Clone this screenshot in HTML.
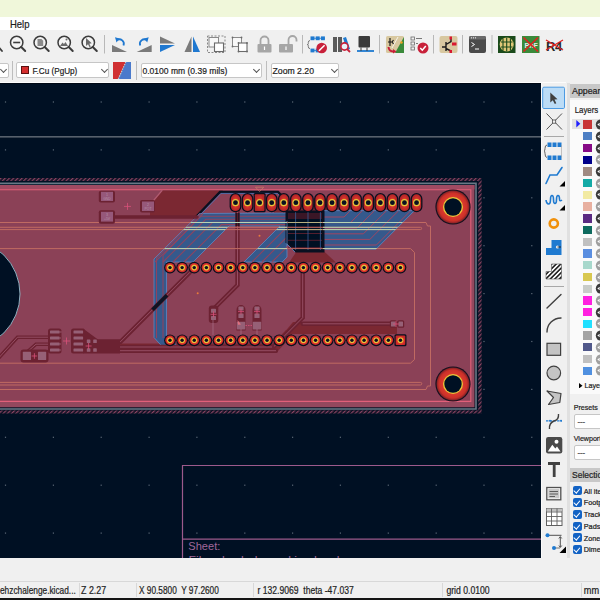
<!DOCTYPE html>
<html><head><meta charset="utf-8">
<style>
*{margin:0;padding:0;box-sizing:border-box}
html,body{width:600px;height:600px;overflow:hidden;background:#f0f0f0;font-family:"Liberation Sans",sans-serif;font-size:10px;color:#000}
.abs{position:absolute}
.t{position:absolute;white-space:nowrap;font-family:"Liberation Sans",sans-serif;color:#1e1e1e;line-height:1}
.dd{position:absolute;background:#fff;border:1px solid #c6c6c6;border-radius:2px}
.chev{position:absolute;width:5px;height:5px;border-right:1px solid #555;border-bottom:1px solid #555;transform:rotate(45deg)}
.sep{position:absolute;width:1px;background:#bdbdbd}
.cb{position:absolute;left:572.5px;width:9px;height:9px;background:#1262c4;border-radius:2px}
.cb:after{content:"";position:absolute;left:2.8px;top:1.2px;width:2.6px;height:4.6px;border-right:1px solid #fff;border-bottom:1px solid #fff;transform:rotate(40deg)}
</style></head><body>
<div class="abs" style="left:0;top:0;width:600px;height:17px;background:#f0f7da"></div>
<div class="abs" style="left:0;top:17px;width:600px;height:13px;background:#fff"></div>
<svg class="abs" style="left:0;top:0" width="600" height="60" viewBox="0 0 600 60">

<path d="M-3 45 L2 51" stroke="#3c3c3c" stroke-width="1.8" stroke-linecap="round"/>
<circle cx="16.7" cy="42.5" r="6.2" fill="#f4f4f4" stroke="#3c3c3c" stroke-width="1.5"/>
<path d="M21.2 47 L25.2 51" stroke="#3c3c3c" stroke-width="2" stroke-linecap="round"/>
<path d="M13.2 42.5 H20.2" stroke="#3c3c3c" stroke-width="1.6"/>
<circle cx="40.2" cy="42.5" r="6.2" fill="#f4f4f4" stroke="#3c3c3c" stroke-width="1.5"/>
<path d="M44.7 47 L48.7 51" stroke="#3c3c3c" stroke-width="2" stroke-linecap="round"/>
<path d="M37.5 39 H41.5 L43.2 40.7 V46 H37.5 Z" fill="#8a8a8a"/>
<circle cx="64.2" cy="42.5" r="6.2" fill="#f4f4f4" stroke="#3c3c3c" stroke-width="1.5"/>
<path d="M68.7 47 L72.7 51" stroke="#3c3c3c" stroke-width="2" stroke-linecap="round"/>
<path d="M60 46 L62.5 42.5 L64 44 L65.5 42 L68 46 Z" fill="#6a6a6a"/><circle cx="66.5" cy="39.5" r="1" fill="#6a6a6a"/>
<circle cx="88.3" cy="42.5" r="6.2" fill="#f4f4f4" stroke="#3c3c3c" stroke-width="1.5"/>
<path d="M92.8 47 L96.8 51" stroke="#3c3c3c" stroke-width="2" stroke-linecap="round"/>
<path d="M86 38 L86 46 L88 44.3 L89.6 47.2 L90.8 46.5 L89.3 43.7 L91.8 43.3 Z" fill="#6a6a6a"/>
<rect x="104" y="35" width="1" height="18.5" fill="#b8b8b8"/>
<path d="M112 45 L127 52 H112 Z" fill="#7a7a7a"/>
<path d="M123.5 45.5 A4.5 4.5 0 0 0 117 40" fill="none" stroke="#1f78d0" stroke-width="1.8"/><path d="M115 37.3 L119.5 38.5 L116.5 42.5 Z" fill="#1f78d0"/>
<path d="M151.7 45 L136.7 52 H151.7 Z" fill="#7a7a7a"/>
<path d="M140.2 45.5 A4.5 4.5 0 0 1 146.7 40" fill="none" stroke="#1f78d0" stroke-width="1.8"/><path d="M148.7 37.3 L144.2 38.5 L147.2 42.5 Z" fill="#1f78d0"/>
<path d="M160 36.5 L175 43.5 H160 Z" fill="#7a7a7a"/><path d="M160 45 H175 L160 52 Z" fill="#1f78d0"/>
<path d="M191.5 36.5 V52 H184.5 Z" fill="#7a7a7a"/><path d="M193 36.5 L200 52 H193 Z" fill="#1f78d0"/>
<rect x="207.5" y="36" width="17.5" height="16.5" fill="none" stroke="#8a8a8a" stroke-width="1" stroke-dasharray="2 1.5"/>
<rect x="209" y="37.5" width="9.5" height="9.5" fill="#f8f8f8" stroke="#8a8a8a" stroke-width="1"/>
<rect x="214.5" y="43" width="9" height="8.5" fill="#fff" stroke="#6a6a6a" stroke-width="1.1"/>
<rect x="232.5" y="37.5" width="9" height="9" fill="#f8f8f8" stroke="#8a8a8a" stroke-width="1"/>
<rect x="238.5" y="43" width="8.5" height="8.5" fill="#fff" stroke="#6a6a6a" stroke-width="1.1"/>
<circle cx="232.5" cy="37.5" r="0.9" fill="#6a6a6a"/>
<circle cx="241.5" cy="37.5" r="0.9" fill="#6a6a6a"/>
<circle cx="232.5" cy="46.5" r="0.9" fill="#6a6a6a"/>
<circle cx="238.5" cy="43" r="0.9" fill="#6a6a6a"/>
<circle cx="247" cy="43" r="0.9" fill="#6a6a6a"/>
<circle cx="238.5" cy="51.5" r="0.9" fill="#6a6a6a"/>
<circle cx="247" cy="51.5" r="0.9" fill="#6a6a6a"/>
<path d="M260.5 44 V40.5 A4 4 0 0 1 268.5 40.5 V44" fill="none" stroke="#a6a6a6" stroke-width="1.8"/>
<rect x="257.5" y="44" width="14" height="8.5" rx="1" fill="#a6a6a6"/><path d="M264.5 46.5 V50" stroke="#fff" stroke-width="1.2"/>
<path d="M288.5 44 V40 A4 4 0 0 1 296.5 40 V41.5" fill="none" stroke="#a6a6a6" stroke-width="1.8"/>
<rect x="279" y="44" width="14" height="8.5" rx="1" fill="#a6a6a6"/><path d="M286 46.5 V50" stroke="#fff" stroke-width="1.2"/>
<rect x="302" y="35" width="1" height="18.5" fill="#b8b8b8"/>
<path d="M311 38.3 H325 M311 50.5 H320" stroke="#1f7ad0" stroke-width="0.8"/>
<rect x="310.5" y="36.4" width="4" height="3.8" fill="#1f7ad0"/>
<rect x="315.7" y="36.4" width="4" height="3.8" fill="#1f7ad0"/>
<rect x="320.9" y="36.4" width="4" height="3.8" fill="#1f7ad0"/>
<rect x="310.5" y="48.6" width="4" height="3.8" fill="#1f7ad0"/>
<rect x="315.7" y="48.6" width="4" height="3.8" fill="#1f7ad0"/>
<path d="M310 40.5 Q308.3 40.5 308.3 42.5 V43.6 Q308.3 44.6 307.3 44.6 Q308.3 44.6 308.3 45.6 V46.6 Q308.3 48.6 310 48.6" fill="none" stroke="#6a6a6a" stroke-width="0.9"/>
<circle cx="321.7" cy="48" r="5.3" fill="#c8203a"/><path d="M319 50.8 L324.6 45.2" stroke="#fff" stroke-width="1.5"/><path d="M318.6 51.3 L319.3 49.6 L320.3 50.6 Z" fill="#fff"/>
<rect x="333" y="37" width="4" height="15" fill="#5a5a5a"/><rect x="338" y="37" width="4" height="15" fill="#5a5a5a"/>
<path d="M343 38 L346 37 L350 49 L347 50 Z" fill="#1f7ad0"/>
<circle cx="344.5" cy="46.5" r="3.6" fill="#e8f0f8" stroke="#c8203a" stroke-width="1.6"/><path d="M347 49 L350 52" stroke="#c8203a" stroke-width="1.8"/>
<rect x="358.5" y="36" width="11.5" height="11.5" rx="1" fill="#3a3a3a"/><path d="M357 51 H374" stroke="#1f7ad0" stroke-width="1.8"/><path d="M361 47.5 V51 M367 47.5 V51" stroke="#3a3a3a" stroke-width="1"/>
<rect x="379" y="35" width="1" height="18.5" fill="#b8b8b8"/>
<rect x="386" y="36" width="18" height="17" rx="1.5" fill="#d8c8a0"/><path d="M404 37 V53 H395 Z" fill="#3a8a3a"/>
<path d="M398 37 L392 48" stroke="#fff" stroke-width="0.8"/><path d="M390 38 V46 M388 42 H392 L393.5 40 M392 42 L393.5 44" stroke="#1a1a1a" stroke-width="1.2" fill="none"/>
<path d="M388.5 47 Q389 52 394 51.5" fill="none" stroke="#c8203a" stroke-width="2"/><path d="M393 49 L396.5 51.5 L393 53.5 Z" fill="#c8203a"/><circle cx="401.5" cy="42.5" r="1.2" fill="#f0a020"/>
<rect x="411" y="37" width="3.5" height="3" fill="none" stroke="#6a6a6a" stroke-width="0.8"/><rect x="411" y="42" width="3.5" height="3" fill="none" stroke="#6a6a6a" stroke-width="0.8"/><rect x="411" y="47" width="3.5" height="3" fill="none" stroke="#6a6a6a" stroke-width="0.8"/>
<path d="M416 38.5 H422 M416 43.5 H418" stroke="#6a6a6a" stroke-width="0.9"/>
<circle cx="423" cy="48" r="5.5" fill="#c8203a"/><path d="M420.3 48 L422.3 50.2 L425.8 46" fill="none" stroke="#fff" stroke-width="1.5"/>
<rect x="433" y="35" width="1" height="18.5" fill="#b8b8b8"/>
<rect x="439.5" y="36" width="18" height="17" rx="2" fill="#d8c8a0"/>
<path d="M442 47 H446 M446 42 V51 M446 44.5 L451 41.5 V38 M446 48.5 L451 51 V53" stroke="#1a1a1a" stroke-width="1.4" fill="none"/><path d="M449.5 36.5 H452 V39.5 H449.5 Z M452 42.5 H456.5 V45.5 H452 Z M449.5 50 H452 V53 H449.5 Z" fill="#d81830"/>
<rect x="462" y="35" width="1" height="18.5" fill="#b8b8b8"/>
<rect x="469" y="36" width="17" height="17" rx="2" fill="#4a4a4a"/><rect x="469" y="36" width="17" height="3.5" rx="1.5" fill="#6a6a6a"/>
<circle cx="471.5" cy="37.8" r="0.6" fill="#fff"/><circle cx="473.5" cy="37.8" r="0.6" fill="#fff"/><circle cx="475.5" cy="37.8" r="0.6" fill="#fff"/>
<path d="M471.5 42.5 L474.5 44.5 L471.5 46.5" fill="none" stroke="#fff" stroke-width="1"/><path d="M475 49 H479" stroke="#fff" stroke-width="1"/>
<rect x="491.5" y="35" width="1" height="18.5" fill="#b8b8b8"/>
<rect x="498" y="36" width="17.5" height="17" fill="#1a4a1a"/><circle cx="506.7" cy="44.5" r="7" fill="#e0c878"/>
<path d="M503 38.5 V50.5 M506.7 37.5 V51.5 M510.4 38.5 V50.5 M501 42 H512.5 M501 47 H512.5" stroke="#1a4a1a" stroke-width="1.1"/>
<rect x="522" y="36" width="17.5" height="17" fill="#3a8a3a"/><text x="524.5" y="47.5" font-family="Liberation Sans" font-size="7" font-weight="bold" fill="#e8e8e8">PnF</text>
<path d="M523.5 37.5 L538 51.5 M538 37.5 L523.5 51.5" stroke="#e02020" stroke-width="1.5"/>
<text x="546" y="51" font-family="Liberation Sans" font-size="13" font-weight="bold" fill="#2a2a2a" letter-spacing="-0.5">R4</text>
<path d="M546 40 L563 50 M546 50 L563 40" stroke="#e02020" stroke-width="1.3"/>
</svg>
<!-- toolbar 2 -->
<div class="dd" style="left:-20px;top:62.5px;width:28.5px;height:15px"></div>
<div class="chev" style="left:1px;top:67px"></div>
<div class="sep" style="left:11.5px;top:61px;height:19px"></div>
<div class="dd" style="left:16px;top:62px;width:93px;height:15.5px"></div>
<div class="abs" style="left:20.5px;top:65.8px;width:8px;height:8px;background:#d42e2e;border:1px solid #5a1010"></div>
<div class="chev" style="left:101.5px;top:67px"></div>
<svg class="abs" style="left:113px;top:61.7px" width="18" height="17" viewBox="0 0 18 17"><rect width="18" height="17" fill="#d03032"/><path d="M13 0 H18 V17 H5 Z" fill="#4a7acc"/><path d="M5.3 17 L12.8 0" stroke="#c8c8c8" stroke-width="1.2" stroke-dasharray="1.5 1"/></svg>
<div class="sep" style="left:136px;top:61px;height:19px"></div>
<div class="dd" style="left:140.5px;top:62.5px;width:121.5px;height:15.5px"></div>
<div class="chev" style="left:254px;top:67px"></div>
<div class="sep" style="left:265.5px;top:61px;height:19px"></div>
<div class="dd" style="left:270.5px;top:62.5px;width:68.5px;height:15.5px"></div>
<div class="chev" style="left:331.5px;top:67px"></div>
<!-- canvas -->
<div class="abs" style="left:0;top:82px;width:566px;height:1.2px;background:#fcfcfc"></div>
<div class="abs" style="left:0;top:83px;width:540.5px;height:474.5px;background:#001023;overflow:hidden">
<svg width="541" height="475" viewBox="0 83 541 475">

<defs>
<pattern id="hat" width="3" height="3" patternUnits="userSpaceOnUse" patternTransform="rotate(45)"><rect width="3" height="3" fill="#0c1022"/><rect width="1.3" height="3" fill="#8a4462"/></pattern>
<radialGradient id="grd"><stop offset="0.5" stop-color="#ea5a2e"/><stop offset="0.78" stop-color="#d8302a"/><stop offset="1" stop-color="#c8282a"/></radialGradient>
<radialGradient id="gov"><stop offset="0.3" stop-color="#e85a2e"/><stop offset="0.6" stop-color="#d0302a"/><stop offset="1" stop-color="#b42628"/></radialGradient>
<radialGradient id="ghole"><stop offset="0.6" stop-color="#dc3a2e"/><stop offset="0.85" stop-color="#cc3028"/><stop offset="1" stop-color="#7a2028"/></radialGradient>
<clipPath id="board"><rect x="-5" y="185" width="479.5" height="222"/></clipPath>
</defs>
<rect x="4.9" y="101.4" width="1.2" height="1.2" fill="#5c6a78"/>
<rect x="4.9" y="149.3" width="1.2" height="1.2" fill="#5c6a78"/>
<rect x="4.9" y="197.2" width="1.2" height="1.2" fill="#5c6a78"/>
<rect x="4.9" y="245.1" width="1.2" height="1.2" fill="#5c6a78"/>
<rect x="4.9" y="293.0" width="1.2" height="1.2" fill="#5c6a78"/>
<rect x="4.9" y="340.9" width="1.2" height="1.2" fill="#5c6a78"/>
<rect x="4.9" y="388.8" width="1.2" height="1.2" fill="#5c6a78"/>
<rect x="4.9" y="436.7" width="1.2" height="1.2" fill="#5c6a78"/>
<rect x="4.9" y="484.6" width="1.2" height="1.2" fill="#5c6a78"/>
<rect x="4.9" y="532.5" width="1.2" height="1.2" fill="#5c6a78"/>
<rect x="52.8" y="101.4" width="1.2" height="1.2" fill="#5c6a78"/>
<rect x="52.8" y="149.3" width="1.2" height="1.2" fill="#5c6a78"/>
<rect x="52.8" y="197.2" width="1.2" height="1.2" fill="#5c6a78"/>
<rect x="52.8" y="245.1" width="1.2" height="1.2" fill="#5c6a78"/>
<rect x="52.8" y="293.0" width="1.2" height="1.2" fill="#5c6a78"/>
<rect x="52.8" y="340.9" width="1.2" height="1.2" fill="#5c6a78"/>
<rect x="52.8" y="388.8" width="1.2" height="1.2" fill="#5c6a78"/>
<rect x="52.8" y="436.7" width="1.2" height="1.2" fill="#5c6a78"/>
<rect x="52.8" y="484.6" width="1.2" height="1.2" fill="#5c6a78"/>
<rect x="52.8" y="532.5" width="1.2" height="1.2" fill="#5c6a78"/>
<rect x="100.6" y="101.4" width="1.2" height="1.2" fill="#5c6a78"/>
<rect x="100.6" y="149.3" width="1.2" height="1.2" fill="#5c6a78"/>
<rect x="100.6" y="197.2" width="1.2" height="1.2" fill="#5c6a78"/>
<rect x="100.6" y="245.1" width="1.2" height="1.2" fill="#5c6a78"/>
<rect x="100.6" y="293.0" width="1.2" height="1.2" fill="#5c6a78"/>
<rect x="100.6" y="340.9" width="1.2" height="1.2" fill="#5c6a78"/>
<rect x="100.6" y="388.8" width="1.2" height="1.2" fill="#5c6a78"/>
<rect x="100.6" y="436.7" width="1.2" height="1.2" fill="#5c6a78"/>
<rect x="100.6" y="484.6" width="1.2" height="1.2" fill="#5c6a78"/>
<rect x="100.6" y="532.5" width="1.2" height="1.2" fill="#5c6a78"/>
<rect x="148.5" y="101.4" width="1.2" height="1.2" fill="#5c6a78"/>
<rect x="148.5" y="149.3" width="1.2" height="1.2" fill="#5c6a78"/>
<rect x="148.5" y="197.2" width="1.2" height="1.2" fill="#5c6a78"/>
<rect x="148.5" y="245.1" width="1.2" height="1.2" fill="#5c6a78"/>
<rect x="148.5" y="293.0" width="1.2" height="1.2" fill="#5c6a78"/>
<rect x="148.5" y="340.9" width="1.2" height="1.2" fill="#5c6a78"/>
<rect x="148.5" y="388.8" width="1.2" height="1.2" fill="#5c6a78"/>
<rect x="148.5" y="436.7" width="1.2" height="1.2" fill="#5c6a78"/>
<rect x="148.5" y="484.6" width="1.2" height="1.2" fill="#5c6a78"/>
<rect x="148.5" y="532.5" width="1.2" height="1.2" fill="#5c6a78"/>
<rect x="196.3" y="101.4" width="1.2" height="1.2" fill="#5c6a78"/>
<rect x="196.3" y="149.3" width="1.2" height="1.2" fill="#5c6a78"/>
<rect x="196.3" y="197.2" width="1.2" height="1.2" fill="#5c6a78"/>
<rect x="196.3" y="245.1" width="1.2" height="1.2" fill="#5c6a78"/>
<rect x="196.3" y="293.0" width="1.2" height="1.2" fill="#5c6a78"/>
<rect x="196.3" y="340.9" width="1.2" height="1.2" fill="#5c6a78"/>
<rect x="196.3" y="388.8" width="1.2" height="1.2" fill="#5c6a78"/>
<rect x="196.3" y="436.7" width="1.2" height="1.2" fill="#5c6a78"/>
<rect x="196.3" y="484.6" width="1.2" height="1.2" fill="#5c6a78"/>
<rect x="196.3" y="532.5" width="1.2" height="1.2" fill="#5c6a78"/>
<rect x="244.2" y="101.4" width="1.2" height="1.2" fill="#5c6a78"/>
<rect x="244.2" y="149.3" width="1.2" height="1.2" fill="#5c6a78"/>
<rect x="244.2" y="197.2" width="1.2" height="1.2" fill="#5c6a78"/>
<rect x="244.2" y="245.1" width="1.2" height="1.2" fill="#5c6a78"/>
<rect x="244.2" y="293.0" width="1.2" height="1.2" fill="#5c6a78"/>
<rect x="244.2" y="340.9" width="1.2" height="1.2" fill="#5c6a78"/>
<rect x="244.2" y="388.8" width="1.2" height="1.2" fill="#5c6a78"/>
<rect x="244.2" y="436.7" width="1.2" height="1.2" fill="#5c6a78"/>
<rect x="244.2" y="484.6" width="1.2" height="1.2" fill="#5c6a78"/>
<rect x="244.2" y="532.5" width="1.2" height="1.2" fill="#5c6a78"/>
<rect x="292.0" y="101.4" width="1.2" height="1.2" fill="#5c6a78"/>
<rect x="292.0" y="149.3" width="1.2" height="1.2" fill="#5c6a78"/>
<rect x="292.0" y="197.2" width="1.2" height="1.2" fill="#5c6a78"/>
<rect x="292.0" y="245.1" width="1.2" height="1.2" fill="#5c6a78"/>
<rect x="292.0" y="293.0" width="1.2" height="1.2" fill="#5c6a78"/>
<rect x="292.0" y="340.9" width="1.2" height="1.2" fill="#5c6a78"/>
<rect x="292.0" y="388.8" width="1.2" height="1.2" fill="#5c6a78"/>
<rect x="292.0" y="436.7" width="1.2" height="1.2" fill="#5c6a78"/>
<rect x="292.0" y="484.6" width="1.2" height="1.2" fill="#5c6a78"/>
<rect x="292.0" y="532.5" width="1.2" height="1.2" fill="#5c6a78"/>
<rect x="339.8" y="101.4" width="1.2" height="1.2" fill="#5c6a78"/>
<rect x="339.8" y="149.3" width="1.2" height="1.2" fill="#5c6a78"/>
<rect x="339.8" y="197.2" width="1.2" height="1.2" fill="#5c6a78"/>
<rect x="339.8" y="245.1" width="1.2" height="1.2" fill="#5c6a78"/>
<rect x="339.8" y="293.0" width="1.2" height="1.2" fill="#5c6a78"/>
<rect x="339.8" y="340.9" width="1.2" height="1.2" fill="#5c6a78"/>
<rect x="339.8" y="388.8" width="1.2" height="1.2" fill="#5c6a78"/>
<rect x="339.8" y="436.7" width="1.2" height="1.2" fill="#5c6a78"/>
<rect x="339.8" y="484.6" width="1.2" height="1.2" fill="#5c6a78"/>
<rect x="339.8" y="532.5" width="1.2" height="1.2" fill="#5c6a78"/>
<rect x="387.7" y="101.4" width="1.2" height="1.2" fill="#5c6a78"/>
<rect x="387.7" y="149.3" width="1.2" height="1.2" fill="#5c6a78"/>
<rect x="387.7" y="197.2" width="1.2" height="1.2" fill="#5c6a78"/>
<rect x="387.7" y="245.1" width="1.2" height="1.2" fill="#5c6a78"/>
<rect x="387.7" y="293.0" width="1.2" height="1.2" fill="#5c6a78"/>
<rect x="387.7" y="340.9" width="1.2" height="1.2" fill="#5c6a78"/>
<rect x="387.7" y="388.8" width="1.2" height="1.2" fill="#5c6a78"/>
<rect x="387.7" y="436.7" width="1.2" height="1.2" fill="#5c6a78"/>
<rect x="387.7" y="484.6" width="1.2" height="1.2" fill="#5c6a78"/>
<rect x="387.7" y="532.5" width="1.2" height="1.2" fill="#5c6a78"/>
<rect x="435.6" y="101.4" width="1.2" height="1.2" fill="#5c6a78"/>
<rect x="435.6" y="149.3" width="1.2" height="1.2" fill="#5c6a78"/>
<rect x="435.6" y="197.2" width="1.2" height="1.2" fill="#5c6a78"/>
<rect x="435.6" y="245.1" width="1.2" height="1.2" fill="#5c6a78"/>
<rect x="435.6" y="293.0" width="1.2" height="1.2" fill="#5c6a78"/>
<rect x="435.6" y="340.9" width="1.2" height="1.2" fill="#5c6a78"/>
<rect x="435.6" y="388.8" width="1.2" height="1.2" fill="#5c6a78"/>
<rect x="435.6" y="436.7" width="1.2" height="1.2" fill="#5c6a78"/>
<rect x="435.6" y="484.6" width="1.2" height="1.2" fill="#5c6a78"/>
<rect x="435.6" y="532.5" width="1.2" height="1.2" fill="#5c6a78"/>
<rect x="483.4" y="101.4" width="1.2" height="1.2" fill="#5c6a78"/>
<rect x="483.4" y="149.3" width="1.2" height="1.2" fill="#5c6a78"/>
<rect x="483.4" y="197.2" width="1.2" height="1.2" fill="#5c6a78"/>
<rect x="483.4" y="245.1" width="1.2" height="1.2" fill="#5c6a78"/>
<rect x="483.4" y="293.0" width="1.2" height="1.2" fill="#5c6a78"/>
<rect x="483.4" y="340.9" width="1.2" height="1.2" fill="#5c6a78"/>
<rect x="483.4" y="388.8" width="1.2" height="1.2" fill="#5c6a78"/>
<rect x="483.4" y="436.7" width="1.2" height="1.2" fill="#5c6a78"/>
<rect x="483.4" y="484.6" width="1.2" height="1.2" fill="#5c6a78"/>
<rect x="483.4" y="532.5" width="1.2" height="1.2" fill="#5c6a78"/>
<rect x="531.2" y="101.4" width="1.2" height="1.2" fill="#5c6a78"/>
<rect x="531.2" y="149.3" width="1.2" height="1.2" fill="#5c6a78"/>
<rect x="531.2" y="197.2" width="1.2" height="1.2" fill="#5c6a78"/>
<rect x="531.2" y="245.1" width="1.2" height="1.2" fill="#5c6a78"/>
<rect x="531.2" y="293.0" width="1.2" height="1.2" fill="#5c6a78"/>
<rect x="531.2" y="340.9" width="1.2" height="1.2" fill="#5c6a78"/>
<rect x="531.2" y="388.8" width="1.2" height="1.2" fill="#5c6a78"/>
<rect x="531.2" y="436.7" width="1.2" height="1.2" fill="#5c6a78"/>
<rect x="531.2" y="484.6" width="1.2" height="1.2" fill="#5c6a78"/>
<rect x="531.2" y="532.5" width="1.2" height="1.2" fill="#5c6a78"/>
<rect x="0" y="136" width="541" height="1.6" fill="#56606c"/>
<path d="M182.5 558 V465.5 H541 M182.5 539.2 H541" fill="none" stroke="#9c5a8c" stroke-width="1.2"/>
<text x="188.3" y="550.2" font-family="Liberation Sans" font-size="11" fill="#a0689a" textLength="32" lengthAdjust="spacingAndGlyphs">Sheet:</text>
<text x="188.5" y="564.3" font-family="Liberation Sans" font-size="11" fill="#a0689a" textLength="155" lengthAdjust="spacingAndGlyphs">File: ehzchalenge.kicad_pcb</text>
<path d="M-5 178 H481.6 V413.6 H-5 V410.6 H478.3 V181.1 H-5 Z" fill="url(#hat)"/>
<path d="M-5 183.4 H476 V409 H-5" fill="none" stroke="#687886" stroke-width="1.6"/>
<rect x="-5" y="185" width="479.5" height="222.3" fill="#94485e"/>
<rect x="-5" y="185" width="479.5" height="4.5" fill="#a04a62"/>
<rect x="-5" y="189.5" width="476" height="212" fill="#8b4157"/>
<path d="M-5 189.8 H470.8 V401.4 H-5" fill="none" stroke="#e2607a" stroke-width="1.1"/>
<g clip-path="url(#board)">
<path d="M162.0 190.5 L223.0 190.5 L196.0 217.5 L150.0 217.5 L150.0 201.0 L154.0 200.0 Z" fill="#7b2832"/>
<rect x="274" y="204" width="60" height="9" fill="#7b2832"/>
<path d="M298.0 249.5 L322.0 249.5 L336.0 262.5 L289.0 262.5 Z" fill="#7b2832"/>
<path d="M293.0 322.0 L397.0 322.0 L397.0 334.0 L283.0 334.0 Z" fill="#7b2832"/>
<path d="M96.0 343.5 L273.0 343.5 L286.0 330.0 L292.0 330.0 L292.0 336.0 L276.0 353.0 L96.0 353.0 Z" fill="#7b2832"/>
<path d="M290 204 L278 192 H220 L194 219" fill="none" stroke="#0a1020" stroke-width="2.4"/>
<path d="M288.5 204.5 L277.5 193.4 H221 L195.5 219.8" fill="none" stroke="#4a7ac0" stroke-width="0.8"/>
<clipPath id="blueclip"><path d="M154.0 337.5 L164.0 348.5 L180.0 348.5 L166.5 336.0 L166.5 262.0 L193.0 262.0 L229.0 226.0 L280.0 226.0 L244.0 262.0 L282.0 262.0 L287.0 257.0 L287.0 213.0 L199.5 213.5 L154.0 259.0 Z M323.0 210.6 L414.5 210.6 L376.0 249.2 L323.0 249.2 Z"/></clipPath>
<path d="M154.0 337.5 L164.0 348.5 L180.0 348.5 L166.5 336.0 L166.5 262.0 L193.0 262.0 L229.0 226.0 L280.0 226.0 L244.0 262.0 L282.0 262.0 L287.0 257.0 L287.0 213.0 L199.5 213.5 L154.0 259.0 Z" fill="#35598c" stroke="#5a88c4" stroke-width="0.8"/>
<path d="M323.0 210.6 L414.5 210.6 L376.0 249.2 L323.0 249.2 Z" fill="#35598c" stroke="#5a88c4" stroke-width="0.8"/>
<path d="M155 262 L200.7 216.3 H287" fill="none" stroke="#8e4460" stroke-width="1.1"/>
<path d="M163 262 L205.7 219.3 H287" fill="none" stroke="#8e4460" stroke-width="1.1"/>
<path d="M173 262 L212.8 222.2 H287" fill="none" stroke="#8e4460" stroke-width="1.1"/>
<path d="M184 262 L221.4 224.6 H287" fill="none" stroke="#8e4460" stroke-width="1.1"/>
<path d="M156.5 338 V258.0 L200.5 213.5" fill="none" stroke="#8e4460" stroke-width="1.1"/>
<path d="M163 338 V255.4 L203.1 213.5" fill="none" stroke="#8e4460" stroke-width="1.1"/>
<path d="M252 262 L285.5 228.5 H287" fill="none" stroke="#8e4460" stroke-width="1.1"/>
<path d="M262 262 L290 234 H287" fill="none" stroke="#8e4460" stroke-width="1.1"/>
<path d="M272 262 L293.7 240.3 H287" fill="none" stroke="#8e4460" stroke-width="1.1"/>
<path d="M350.0 211 L344.0 217.0 H323" fill="none" stroke="#a04662" stroke-width="1"/>
<path d="M362.1 211 L350.5 222.6 H323" fill="none" stroke="#a04662" stroke-width="1"/>
<path d="M374.1 211 L356.9 228.2 H323" fill="none" stroke="#a04662" stroke-width="1"/>
<path d="M386.2 211 L363.4 233.8 H323" fill="none" stroke="#a04662" stroke-width="1"/>
<path d="M398.3 211 L369.9 239.4 H323" fill="none" stroke="#a04662" stroke-width="1"/>
<path d="M410.4 211 L376.4 245.0 H323" fill="none" stroke="#a04662" stroke-width="1"/>
<path d="M285.5 210.5 L324.5 210.5 L324.5 252.5 L295.5 252.5 L285.5 242.5 Z" fill="#0a1020"/>
<path d="M288.0 213.0 L322.0 213.0 L322.0 250.0 L296.5 250.0 L288.0 241.5 Z" fill="#001023"/>
<rect x="288" y="213" width="34" height="6" fill="#3a1626"/>
<path d="M288 227.3 H322" stroke="#6a2230" stroke-width="0.8"/>
<path d="M288 233.5 H322" stroke="#6a2230" stroke-width="0.8"/>
<path d="M288 240.3 H322" stroke="#6a2230" stroke-width="0.8"/>
<path d="M288 247.7 H322" stroke="#6a2230" stroke-width="0.8"/>
<path d="M295.6 211 V250" stroke="#3a5e98" stroke-width="0.8"/>
<path d="M308 211 V250" stroke="#3a5e98" stroke-width="0.8"/>
<path d="M320.4 211 V250" stroke="#3a5e98" stroke-width="0.8"/>
<path d="M287 221 V244 L295 252" fill="none" stroke="#5a88c8" stroke-width="0.8"/>
<path d="M237.5 211 V285 L214 308.5" fill="none" stroke="#6c2232" stroke-width="4.4" stroke-linejoin="miter" stroke-linecap="round"/>
<path d="M237.5 211 V285 L214 308.5" fill="none" stroke="#a05870" stroke-width="0.8" stroke-linejoin="miter"/>
<path d="M302.7 273 V317.7 L272 348.4" fill="none" stroke="#6c2232" stroke-width="4.4" stroke-linejoin="miter" stroke-linecap="round"/>
<path d="M302.7 273 V317.7 L272 348.4" fill="none" stroke="#a05870" stroke-width="0.8" stroke-linejoin="miter"/>
<path d="M96 341.7 H120.5 L190 272.2" fill="none" stroke="#6c2232" stroke-width="4.4" stroke-linejoin="miter" stroke-linecap="round"/>
<path d="M96 341.7 H120.5 L190 272.2" fill="none" stroke="#a05870" stroke-width="0.8" stroke-linejoin="miter"/>
<path d="M302.7 323.8 H397" fill="none" stroke="#6c2232" stroke-width="4.4" stroke-linejoin="miter" stroke-linecap="round"/>
<path d="M302.7 323.8 H397" fill="none" stroke="#a05870" stroke-width="0.8" stroke-linejoin="miter"/>
<path d="M96 347 H272 M96 350.7 H276" fill="none" stroke="#6c2232" stroke-width="4.4" stroke-linejoin="miter" stroke-linecap="round"/>
<path d="M96 347 H272 M96 350.7 H276" fill="none" stroke="#a05870" stroke-width="0.8" stroke-linejoin="miter"/>
<path d="M-5 362 L17.5 337.2 H50" fill="none" stroke="#6c2232" stroke-width="3.6" stroke-linejoin="miter" stroke-linecap="round"/>
<path d="M-5 362 L17.5 337.2 H50" fill="none" stroke="#a05870" stroke-width="0.8" stroke-linejoin="miter"/>
<path d="M26 353 L36 344.2 H50" fill="none" stroke="#6c2232" stroke-width="3.6" stroke-linejoin="miter" stroke-linecap="round"/>
<path d="M26 353 L36 344.2 H50" fill="none" stroke="#a05870" stroke-width="0.8" stroke-linejoin="miter"/>
<path d="M46 352 L50 350" fill="none" stroke="#6c2232" stroke-width="2.5" stroke-linejoin="miter" stroke-linecap="round"/>
<path d="M113 217 H197" fill="none" stroke="#6c2232" stroke-width="3.5" stroke-linejoin="miter" stroke-linecap="round"/>
<path d="M154 200 L162 190.5" fill="none" stroke="#b05a70" stroke-width="1.2" stroke-linejoin="miter" stroke-linecap="round"/>
<path d="M152.5 309.7 L167 295.2" stroke="#0e1424" stroke-width="3.6"/>
<path d="M237.5 213 V226" stroke="#0e1424" stroke-width="3.8"/><path d="M237.5 213 V226" stroke="#5a1c2a" stroke-width="1.6"/>
<path d="M-5 222.5 H426 L427.5 226 H430.5 V386 H427.5 L426 389.5 H-5" fill="none" stroke="#c06a62" stroke-width="1"/>
<path d="M-5 227.3 H420.5 A1.15 1.15 0 0 1 420.5 229.6 H-5" fill="none" stroke="#c06a62" stroke-width="1"/>
<path d="M-5 382.4 H420.5 A1.3 1.3 0 0 1 420.5 385 H-5" fill="none" stroke="#c06a62" stroke-width="1"/>
<path d="M-5 248.6 H410.5 L414.5 252.5 V359.5 L410.5 363.2 H-5" fill="none" stroke="#c06a62" stroke-width="1"/>
<g clip-path="url(#blueclip)" fill="none" stroke="#b8d4b4" stroke-width="1">
<path d="M-5 222.5 H426 M-5 227.3 H420.5 M-5 229.6 H420.5 M-5 248.6 H410.5"/>
</g>
<path d="M288 222.5 H322 M288 229.6 H322" stroke="#b8b080" stroke-width="1"/>
<circle cx="-35" cy="294" r="55" fill="#001023" stroke="#8fb0c0" stroke-width="1"/>
<rect x="98.8" y="190.7" width="16.2" height="11.9" rx="2" fill="#6c2232"/>
<rect x="98.8" y="210.2" width="16.2" height="13.5" rx="2" fill="#6c2232"/>
<rect x="140" y="200" width="15" height="12.4" rx="2" fill="#6c2232"/>
<rect x="101" y="191.8" width="12" height="9.2" fill="#96587a"/>
<text x="107.0" y="196.0" font-family="Liberation Sans" font-size="3.6" fill="#b890a8" text-anchor="middle">1</text>
<text x="107.0" y="199.8" font-family="Liberation Sans" font-size="3.4" fill="#b890a8" text-anchor="middle">GND</text>
<rect x="101" y="211.8" width="12" height="9.8" fill="#96587a"/>
<text x="107.0" y="216.0" font-family="Liberation Sans" font-size="3.6" fill="#b890a8" text-anchor="middle">3</text>
<text x="107.0" y="219.8" font-family="Liberation Sans" font-size="3.4" fill="#b890a8" text-anchor="middle">+5V</text>
<rect x="142" y="201.5" width="12" height="9.5" fill="#96587a"/>
<text x="148.0" y="205.7" font-family="Liberation Sans" font-size="3.6" fill="#b890a8" text-anchor="middle">2</text>
<text x="148.0" y="209.5" font-family="Liberation Sans" font-size="3.4" fill="#b890a8" text-anchor="middle">POT</text>
<path d="M124.0 206.4 H131.0 M127.5 202.9 V209.9" stroke="#d8507a" stroke-width="0.8"/>
<rect x="48" y="328.5" width="13.5" height="25" rx="2.5" fill="#6c2232"/>
<rect x="71" y="328.5" width="14" height="25" rx="2.5" fill="#6c2232"/>
<path d="M83 328.5 L98 339.5 H120 V353.5 H83 Z" fill="#6c2232"/>
<rect x="50" y="330.4" width="9.6" height="3.2" rx="0.6" fill="#966076"/>
<rect x="73.5" y="330.4" width="9.6" height="3.2" rx="0.6" fill="#966076"/>
<rect x="50" y="336.4" width="9.6" height="3.2" rx="0.6" fill="#966076"/>
<rect x="73.5" y="336.4" width="9.6" height="3.2" rx="0.6" fill="#966076"/>
<rect x="50" y="342.4" width="9.6" height="3.2" rx="0.6" fill="#966076"/>
<rect x="73.5" y="342.4" width="9.6" height="3.2" rx="0.6" fill="#966076"/>
<rect x="50" y="348.4" width="9.6" height="3.2" rx="0.6" fill="#966076"/>
<rect x="73.5" y="348.4" width="9.6" height="3.2" rx="0.6" fill="#966076"/>
<path d="M59.6 332 H61.5 M59.6 338 H61 M59.6 344 H61 M59.6 350 H61" stroke="#c090a8" stroke-width="0.5"/>
<path d="M63.0 341 H70.0 M66.5 337.5 V344.5" stroke="#d8507a" stroke-width="0.8"/>
<rect x="86.8" y="339.5" width="3.6" height="3.5" rx="0.6" fill="#966076"/>
<rect x="86.8" y="348.3" width="3.6" height="3.5" rx="0.6" fill="#966076"/>
<rect x="93.2" y="339.5" width="3.6" height="3.5" rx="0.6" fill="#966076"/>
<rect x="93.2" y="348.3" width="3.6" height="3.5" rx="0.6" fill="#966076"/>
<path d="M85.6 346 H91.6 M88.6 343 V349" stroke="#d8507a" stroke-width="0.8"/>
<rect x="20.5" y="349.5" width="28" height="13" rx="3" fill="#6c2232"/>
<rect x="22.8" y="351.8" width="8.2" height="8.2" rx="0.6" fill="#966076"/>
<rect x="38" y="351.8" width="8.2" height="8.2" rx="0.6" fill="#966076"/>
<path d="M31.599999999999998 356 H37.199999999999996 M34.4 353.2 V358.8" stroke="#d8507a" stroke-width="0.8"/>
<rect x="208.8" y="305.5" width="9.5" height="17.5" rx="3" fill="#6c2232"/>
<rect x="211" y="308.8" width="5" height="4" rx="0.6" fill="#966076"/>
<rect x="211" y="316" width="5" height="4" rx="0.6" fill="#966076"/>
<path d="M210.5 314.3 H216.5 M213.5 311.3 V317.3" stroke="#d8507a" stroke-width="0.8"/>
<path d="M213 320 V335" stroke="#b07a90" stroke-width="0.6"/>
<path d="M236.5 330.5 V310 A4.5 5 0 0 1 245.5 310 V330.5 Z" fill="#6c2232"/>
<rect x="238.4" y="306.5" width="5.2" height="4" rx="0.6" fill="#966076"/>
<rect x="238.4" y="313.5" width="5.2" height="4.5" rx="0.6" fill="#966076"/>
<path d="M238 311.6 H244 M241 308.6 V314.6" stroke="#d8507a" stroke-width="0.8"/>
<rect x="236.8" y="321.8" width="8.4" height="7.6" rx="0.6" fill="#966076"/>
<path d="M241 329 V335" stroke="#b07a90" stroke-width="0.6"/>
<path d="M252.5 330.5 V310 A4.5 5 0 0 1 261.5 310 V330.5 Z" fill="#6c2232"/>
<rect x="254.4" y="306.5" width="5.2" height="4" rx="0.6" fill="#966076"/>
<rect x="254.4" y="313.5" width="5.2" height="4.5" rx="0.6" fill="#966076"/>
<path d="M254 311.6 H260 M257 308.6 V314.6" stroke="#d8507a" stroke-width="0.8"/>
<rect x="252.8" y="321.8" width="8.4" height="7.6" rx="0.6" fill="#966076"/>
<path d="M257 329 V335" stroke="#b07a90" stroke-width="0.6"/>
<path d="M245.5 325.5 H252.5" stroke="#d8507a" stroke-width="0.8" stroke-dasharray="1.5 1"/>
<path d="M237.5 320 L241 324.5 L238 324.7 Z" fill="#e07080"/>
<rect x="389.8" y="320.3" width="6.9" height="7.4" rx="1.5" fill="#6c2232"/>
<rect x="391" y="321.5" width="4.5" height="5" rx="0.6" fill="#966076"/>
<rect x="397.3" y="320.3" width="6.9" height="7.4" rx="1.5" fill="#6c2232"/>
<rect x="398.5" y="321.5" width="4.5" height="5" rx="0.6" fill="#966076"/>
<path d="M393 324 H399 M396 321 V327" stroke="#d8507a" stroke-width="0.8"/>
<circle cx="259.5" cy="235.8" r="1" fill="#e87a3a"/>
<circle cx="197.7" cy="293.3" r="1" fill="#e87a3a"/>
<path d="M255.5 187.2 H263.7 L259.6 191.5 Z" fill="none" stroke="#c8806a" stroke-width="0.7"/>
<circle cx="453" cy="207" r="17.6" fill="#14101e"/>
<circle cx="453" cy="207" r="16.5" fill="url(#ghole)"/>
<circle cx="453" cy="207" r="10" fill="#eac83a"/>
<circle cx="453" cy="207" r="8.7" fill="#001023"/>
<circle cx="453" cy="384" r="17.6" fill="#14101e"/>
<circle cx="453" cy="384" r="16.5" fill="url(#ghole)"/>
<circle cx="453" cy="384" r="10" fill="#eac83a"/>
<circle cx="453" cy="384" r="8.7" fill="#001023"/>
<rect x="229.60" y="193.10" width="11.8" height="19.2" rx="5.9" fill="#0a0f1e"/>
<rect x="230.90" y="194.30" width="9.2" height="16.8" rx="4.6" fill="url(#gov)"/>
<circle cx="235.5" cy="202.7" r="3.6" fill="#e8c23a"/>
<circle cx="235.5" cy="202.7" r="2.4" fill="#0a1020"/>
<rect x="241.67" y="193.10" width="11.8" height="19.2" rx="5.9" fill="#0a0f1e"/>
<rect x="242.97" y="194.30" width="9.2" height="16.8" rx="4.6" fill="url(#gov)"/>
<circle cx="247.57" cy="202.7" r="3.6" fill="#e8c23a"/>
<circle cx="247.57" cy="202.7" r="2.4" fill="#0a1020"/>
<rect x="253.64" y="193.1" width="12" height="19.2" rx="1.5" fill="#0a0f1e"/>
<rect x="254.83999999999997" y="194.29999999999998" width="9.6" height="16.8" rx="1" fill="url(#gov)"/>
<circle cx="259.64" cy="202.7" r="3.6" fill="#e8c23a"/>
<circle cx="259.64" cy="202.7" r="2.4" fill="#0a1020"/>
<rect x="265.81" y="193.10" width="11.8" height="19.2" rx="5.9" fill="#0a0f1e"/>
<rect x="267.11" y="194.30" width="9.2" height="16.8" rx="4.6" fill="url(#gov)"/>
<circle cx="271.71" cy="202.7" r="3.6" fill="#e8c23a"/>
<circle cx="271.71" cy="202.7" r="2.4" fill="#0a1020"/>
<rect x="277.88" y="193.10" width="11.8" height="19.2" rx="5.9" fill="#0a0f1e"/>
<rect x="279.18" y="194.30" width="9.2" height="16.8" rx="4.6" fill="url(#gov)"/>
<circle cx="283.78" cy="202.7" r="3.6" fill="#e8c23a"/>
<circle cx="283.78" cy="202.7" r="2.4" fill="#0a1020"/>
<rect x="289.95" y="193.10" width="11.8" height="19.2" rx="5.9" fill="#0a0f1e"/>
<rect x="291.25" y="194.30" width="9.2" height="16.8" rx="4.6" fill="url(#gov)"/>
<circle cx="295.85" cy="202.7" r="3.6" fill="#e8c23a"/>
<circle cx="295.85" cy="202.7" r="2.4" fill="#0a1020"/>
<rect x="302.02" y="193.10" width="11.8" height="19.2" rx="5.9" fill="#0a0f1e"/>
<rect x="303.32" y="194.30" width="9.2" height="16.8" rx="4.6" fill="url(#gov)"/>
<circle cx="307.92" cy="202.7" r="3.6" fill="#e8c23a"/>
<circle cx="307.92" cy="202.7" r="2.4" fill="#0a1020"/>
<rect x="314.09" y="193.10" width="11.8" height="19.2" rx="5.9" fill="#0a0f1e"/>
<rect x="315.39" y="194.30" width="9.2" height="16.8" rx="4.6" fill="url(#gov)"/>
<circle cx="319.99" cy="202.7" r="3.6" fill="#e8c23a"/>
<circle cx="319.99" cy="202.7" r="2.4" fill="#0a1020"/>
<rect x="326.16" y="193.10" width="11.8" height="19.2" rx="5.9" fill="#0a0f1e"/>
<rect x="327.46" y="194.30" width="9.2" height="16.8" rx="4.6" fill="url(#gov)"/>
<circle cx="332.06" cy="202.7" r="3.6" fill="#e8c23a"/>
<circle cx="332.06" cy="202.7" r="2.4" fill="#0a1020"/>
<rect x="338.23" y="193.10" width="11.8" height="19.2" rx="5.9" fill="#0a0f1e"/>
<rect x="339.53" y="194.30" width="9.2" height="16.8" rx="4.6" fill="url(#gov)"/>
<circle cx="344.13" cy="202.7" r="3.6" fill="#e8c23a"/>
<circle cx="344.13" cy="202.7" r="2.4" fill="#0a1020"/>
<rect x="350.30" y="193.10" width="11.8" height="19.2" rx="5.9" fill="#0a0f1e"/>
<rect x="351.60" y="194.30" width="9.2" height="16.8" rx="4.6" fill="url(#gov)"/>
<circle cx="356.2" cy="202.7" r="3.6" fill="#e8c23a"/>
<circle cx="356.2" cy="202.7" r="2.4" fill="#0a1020"/>
<rect x="362.37" y="193.10" width="11.8" height="19.2" rx="5.9" fill="#0a0f1e"/>
<rect x="363.67" y="194.30" width="9.2" height="16.8" rx="4.6" fill="url(#gov)"/>
<circle cx="368.27" cy="202.7" r="3.6" fill="#e8c23a"/>
<circle cx="368.27" cy="202.7" r="2.4" fill="#0a1020"/>
<rect x="374.44" y="193.10" width="11.8" height="19.2" rx="5.9" fill="#0a0f1e"/>
<rect x="375.74" y="194.30" width="9.2" height="16.8" rx="4.6" fill="url(#gov)"/>
<circle cx="380.34000000000003" cy="202.7" r="3.6" fill="#e8c23a"/>
<circle cx="380.34000000000003" cy="202.7" r="2.4" fill="#0a1020"/>
<rect x="386.51" y="193.10" width="11.8" height="19.2" rx="5.9" fill="#0a0f1e"/>
<rect x="387.81" y="194.30" width="9.2" height="16.8" rx="4.6" fill="url(#gov)"/>
<circle cx="392.40999999999997" cy="202.7" r="3.6" fill="#e8c23a"/>
<circle cx="392.40999999999997" cy="202.7" r="2.4" fill="#0a1020"/>
<rect x="398.58" y="193.10" width="11.8" height="19.2" rx="5.9" fill="#0a0f1e"/>
<rect x="399.88" y="194.30" width="9.2" height="16.8" rx="4.6" fill="url(#gov)"/>
<circle cx="404.48" cy="202.7" r="3.6" fill="#e8c23a"/>
<circle cx="404.48" cy="202.7" r="2.4" fill="#0a1020"/>
<rect x="410.65" y="193.10" width="11.8" height="19.2" rx="5.9" fill="#0a0f1e"/>
<rect x="411.95" y="194.30" width="9.2" height="16.8" rx="4.6" fill="url(#gov)"/>
<circle cx="416.55" cy="202.7" r="3.6" fill="#e8c23a"/>
<circle cx="416.55" cy="202.7" r="2.4" fill="#0a1020"/>
<circle cx="170.0" cy="267.6" r="5.9" fill="#0a0f1e"/>
<circle cx="170.0" cy="267.6" r="4.7" fill="url(#grd)"/>
<circle cx="170.0" cy="267.6" r="2.8" fill="#e8c23a"/>
<circle cx="170.0" cy="267.6" r="1.7" fill="#0a1020"/>
<circle cx="182.13" cy="267.6" r="5.9" fill="#0a0f1e"/>
<circle cx="182.13" cy="267.6" r="4.7" fill="url(#grd)"/>
<circle cx="182.13" cy="267.6" r="2.8" fill="#e8c23a"/>
<circle cx="182.13" cy="267.6" r="1.7" fill="#0a1020"/>
<circle cx="194.26" cy="267.6" r="5.9" fill="#0a0f1e"/>
<circle cx="194.26" cy="267.6" r="4.7" fill="url(#grd)"/>
<circle cx="194.26" cy="267.6" r="2.8" fill="#e8c23a"/>
<circle cx="194.26" cy="267.6" r="1.7" fill="#0a1020"/>
<circle cx="206.39" cy="267.6" r="5.9" fill="#0a0f1e"/>
<circle cx="206.39" cy="267.6" r="4.7" fill="url(#grd)"/>
<circle cx="206.39" cy="267.6" r="2.8" fill="#e8c23a"/>
<circle cx="206.39" cy="267.6" r="1.7" fill="#0a1020"/>
<circle cx="218.52" cy="267.6" r="5.9" fill="#0a0f1e"/>
<circle cx="218.52" cy="267.6" r="4.7" fill="url(#grd)"/>
<circle cx="218.52" cy="267.6" r="2.8" fill="#e8c23a"/>
<circle cx="218.52" cy="267.6" r="1.7" fill="#0a1020"/>
<circle cx="230.65" cy="267.6" r="5.9" fill="#0a0f1e"/>
<circle cx="230.65" cy="267.6" r="4.7" fill="url(#grd)"/>
<circle cx="230.65" cy="267.6" r="2.8" fill="#e8c23a"/>
<circle cx="230.65" cy="267.6" r="1.7" fill="#0a1020"/>
<circle cx="242.78" cy="267.6" r="5.9" fill="#0a0f1e"/>
<circle cx="242.78" cy="267.6" r="4.7" fill="url(#grd)"/>
<circle cx="242.78" cy="267.6" r="2.8" fill="#e8c23a"/>
<circle cx="242.78" cy="267.6" r="1.7" fill="#0a1020"/>
<circle cx="254.91000000000003" cy="267.6" r="5.9" fill="#0a0f1e"/>
<circle cx="254.91000000000003" cy="267.6" r="4.7" fill="url(#grd)"/>
<circle cx="254.91000000000003" cy="267.6" r="2.8" fill="#e8c23a"/>
<circle cx="254.91000000000003" cy="267.6" r="1.7" fill="#0a1020"/>
<circle cx="267.04" cy="267.6" r="5.9" fill="#0a0f1e"/>
<circle cx="267.04" cy="267.6" r="4.7" fill="url(#grd)"/>
<circle cx="267.04" cy="267.6" r="2.8" fill="#e8c23a"/>
<circle cx="267.04" cy="267.6" r="1.7" fill="#0a1020"/>
<circle cx="279.17" cy="267.6" r="5.9" fill="#0a0f1e"/>
<circle cx="279.17" cy="267.6" r="4.7" fill="url(#grd)"/>
<circle cx="279.17" cy="267.6" r="2.8" fill="#e8c23a"/>
<circle cx="279.17" cy="267.6" r="1.7" fill="#0a1020"/>
<circle cx="291.3" cy="267.6" r="5.9" fill="#0a0f1e"/>
<circle cx="291.3" cy="267.6" r="4.7" fill="url(#grd)"/>
<circle cx="291.3" cy="267.6" r="2.8" fill="#e8c23a"/>
<circle cx="291.3" cy="267.6" r="1.7" fill="#0a1020"/>
<circle cx="303.43" cy="267.6" r="5.9" fill="#0a0f1e"/>
<circle cx="303.43" cy="267.6" r="4.7" fill="url(#grd)"/>
<circle cx="303.43" cy="267.6" r="2.8" fill="#e8c23a"/>
<circle cx="303.43" cy="267.6" r="1.7" fill="#0a1020"/>
<circle cx="315.56" cy="267.6" r="5.9" fill="#0a0f1e"/>
<circle cx="315.56" cy="267.6" r="4.7" fill="url(#grd)"/>
<circle cx="315.56" cy="267.6" r="2.8" fill="#e8c23a"/>
<circle cx="315.56" cy="267.6" r="1.7" fill="#0a1020"/>
<circle cx="327.69" cy="267.6" r="5.9" fill="#0a0f1e"/>
<circle cx="327.69" cy="267.6" r="4.7" fill="url(#grd)"/>
<circle cx="327.69" cy="267.6" r="2.8" fill="#e8c23a"/>
<circle cx="327.69" cy="267.6" r="1.7" fill="#0a1020"/>
<circle cx="339.82000000000005" cy="267.6" r="5.9" fill="#0a0f1e"/>
<circle cx="339.82000000000005" cy="267.6" r="4.7" fill="url(#grd)"/>
<circle cx="339.82000000000005" cy="267.6" r="2.8" fill="#e8c23a"/>
<circle cx="339.82000000000005" cy="267.6" r="1.7" fill="#0a1020"/>
<circle cx="351.95000000000005" cy="267.6" r="5.9" fill="#0a0f1e"/>
<circle cx="351.95000000000005" cy="267.6" r="4.7" fill="url(#grd)"/>
<circle cx="351.95000000000005" cy="267.6" r="2.8" fill="#e8c23a"/>
<circle cx="351.95000000000005" cy="267.6" r="1.7" fill="#0a1020"/>
<circle cx="364.08000000000004" cy="267.6" r="5.9" fill="#0a0f1e"/>
<circle cx="364.08000000000004" cy="267.6" r="4.7" fill="url(#grd)"/>
<circle cx="364.08000000000004" cy="267.6" r="2.8" fill="#e8c23a"/>
<circle cx="364.08000000000004" cy="267.6" r="1.7" fill="#0a1020"/>
<circle cx="376.21000000000004" cy="267.6" r="5.9" fill="#0a0f1e"/>
<circle cx="376.21000000000004" cy="267.6" r="4.7" fill="url(#grd)"/>
<circle cx="376.21000000000004" cy="267.6" r="2.8" fill="#e8c23a"/>
<circle cx="376.21000000000004" cy="267.6" r="1.7" fill="#0a1020"/>
<circle cx="388.34000000000003" cy="267.6" r="5.9" fill="#0a0f1e"/>
<circle cx="388.34000000000003" cy="267.6" r="4.7" fill="url(#grd)"/>
<circle cx="388.34000000000003" cy="267.6" r="2.8" fill="#e8c23a"/>
<circle cx="388.34000000000003" cy="267.6" r="1.7" fill="#0a1020"/>
<circle cx="400.47" cy="267.6" r="5.9" fill="#0a0f1e"/>
<circle cx="400.47" cy="267.6" r="4.7" fill="url(#grd)"/>
<circle cx="400.47" cy="267.6" r="2.8" fill="#e8c23a"/>
<circle cx="400.47" cy="267.6" r="1.7" fill="#0a1020"/>
<circle cx="170.0" cy="340.3" r="5.9" fill="#0a0f1e"/>
<circle cx="170.0" cy="340.3" r="4.7" fill="url(#grd)"/>
<circle cx="170.0" cy="340.3" r="2.8" fill="#e8c23a"/>
<circle cx="170.0" cy="340.3" r="1.7" fill="#0a1020"/>
<circle cx="182.13" cy="340.3" r="5.9" fill="#0a0f1e"/>
<circle cx="182.13" cy="340.3" r="4.7" fill="url(#grd)"/>
<circle cx="182.13" cy="340.3" r="2.8" fill="#e8c23a"/>
<circle cx="182.13" cy="340.3" r="1.7" fill="#0a1020"/>
<circle cx="194.26" cy="340.3" r="5.9" fill="#0a0f1e"/>
<circle cx="194.26" cy="340.3" r="4.7" fill="url(#grd)"/>
<circle cx="194.26" cy="340.3" r="2.8" fill="#e8c23a"/>
<circle cx="194.26" cy="340.3" r="1.7" fill="#0a1020"/>
<circle cx="206.39" cy="340.3" r="5.9" fill="#0a0f1e"/>
<circle cx="206.39" cy="340.3" r="4.7" fill="url(#grd)"/>
<circle cx="206.39" cy="340.3" r="2.8" fill="#e8c23a"/>
<circle cx="206.39" cy="340.3" r="1.7" fill="#0a1020"/>
<circle cx="218.52" cy="340.3" r="5.9" fill="#0a0f1e"/>
<circle cx="218.52" cy="340.3" r="4.7" fill="url(#grd)"/>
<circle cx="218.52" cy="340.3" r="2.8" fill="#e8c23a"/>
<circle cx="218.52" cy="340.3" r="1.7" fill="#0a1020"/>
<circle cx="230.65" cy="340.3" r="5.9" fill="#0a0f1e"/>
<circle cx="230.65" cy="340.3" r="4.7" fill="url(#grd)"/>
<circle cx="230.65" cy="340.3" r="2.8" fill="#e8c23a"/>
<circle cx="230.65" cy="340.3" r="1.7" fill="#0a1020"/>
<circle cx="242.78" cy="340.3" r="5.9" fill="#0a0f1e"/>
<circle cx="242.78" cy="340.3" r="4.7" fill="url(#grd)"/>
<circle cx="242.78" cy="340.3" r="2.8" fill="#e8c23a"/>
<circle cx="242.78" cy="340.3" r="1.7" fill="#0a1020"/>
<circle cx="254.91000000000003" cy="340.3" r="5.9" fill="#0a0f1e"/>
<circle cx="254.91000000000003" cy="340.3" r="4.7" fill="url(#grd)"/>
<circle cx="254.91000000000003" cy="340.3" r="2.8" fill="#e8c23a"/>
<circle cx="254.91000000000003" cy="340.3" r="1.7" fill="#0a1020"/>
<circle cx="267.04" cy="340.3" r="5.9" fill="#0a0f1e"/>
<circle cx="267.04" cy="340.3" r="4.7" fill="url(#grd)"/>
<circle cx="267.04" cy="340.3" r="2.8" fill="#e8c23a"/>
<circle cx="267.04" cy="340.3" r="1.7" fill="#0a1020"/>
<circle cx="279.17" cy="340.3" r="5.9" fill="#0a0f1e"/>
<circle cx="279.17" cy="340.3" r="4.7" fill="url(#grd)"/>
<circle cx="279.17" cy="340.3" r="2.8" fill="#e8c23a"/>
<circle cx="279.17" cy="340.3" r="1.7" fill="#0a1020"/>
<circle cx="291.3" cy="340.3" r="5.9" fill="#0a0f1e"/>
<circle cx="291.3" cy="340.3" r="4.7" fill="url(#grd)"/>
<circle cx="291.3" cy="340.3" r="2.8" fill="#e8c23a"/>
<circle cx="291.3" cy="340.3" r="1.7" fill="#0a1020"/>
<circle cx="303.43" cy="340.3" r="5.9" fill="#0a0f1e"/>
<circle cx="303.43" cy="340.3" r="4.7" fill="url(#grd)"/>
<circle cx="303.43" cy="340.3" r="2.8" fill="#e8c23a"/>
<circle cx="303.43" cy="340.3" r="1.7" fill="#0a1020"/>
<circle cx="315.56" cy="340.3" r="5.9" fill="#0a0f1e"/>
<circle cx="315.56" cy="340.3" r="4.7" fill="url(#grd)"/>
<circle cx="315.56" cy="340.3" r="2.8" fill="#e8c23a"/>
<circle cx="315.56" cy="340.3" r="1.7" fill="#0a1020"/>
<circle cx="327.69" cy="340.3" r="5.9" fill="#0a0f1e"/>
<circle cx="327.69" cy="340.3" r="4.7" fill="url(#grd)"/>
<circle cx="327.69" cy="340.3" r="2.8" fill="#e8c23a"/>
<circle cx="327.69" cy="340.3" r="1.7" fill="#0a1020"/>
<circle cx="339.82000000000005" cy="340.3" r="5.9" fill="#0a0f1e"/>
<circle cx="339.82000000000005" cy="340.3" r="4.7" fill="url(#grd)"/>
<circle cx="339.82000000000005" cy="340.3" r="2.8" fill="#e8c23a"/>
<circle cx="339.82000000000005" cy="340.3" r="1.7" fill="#0a1020"/>
<circle cx="351.95000000000005" cy="340.3" r="5.9" fill="#0a0f1e"/>
<circle cx="351.95000000000005" cy="340.3" r="4.7" fill="url(#grd)"/>
<circle cx="351.95000000000005" cy="340.3" r="2.8" fill="#e8c23a"/>
<circle cx="351.95000000000005" cy="340.3" r="1.7" fill="#0a1020"/>
<circle cx="364.08000000000004" cy="340.3" r="5.9" fill="#0a0f1e"/>
<circle cx="364.08000000000004" cy="340.3" r="4.7" fill="url(#grd)"/>
<circle cx="364.08000000000004" cy="340.3" r="2.8" fill="#e8c23a"/>
<circle cx="364.08000000000004" cy="340.3" r="1.7" fill="#0a1020"/>
<circle cx="376.21000000000004" cy="340.3" r="5.9" fill="#0a0f1e"/>
<circle cx="376.21000000000004" cy="340.3" r="4.7" fill="url(#grd)"/>
<circle cx="376.21000000000004" cy="340.3" r="2.8" fill="#e8c23a"/>
<circle cx="376.21000000000004" cy="340.3" r="1.7" fill="#0a1020"/>
<circle cx="388.34000000000003" cy="340.3" r="5.9" fill="#0a0f1e"/>
<circle cx="388.34000000000003" cy="340.3" r="4.7" fill="url(#grd)"/>
<circle cx="388.34000000000003" cy="340.3" r="2.8" fill="#e8c23a"/>
<circle cx="388.34000000000003" cy="340.3" r="1.7" fill="#0a1020"/>
<rect x="394.47" y="334.3" width="12" height="12" rx="1.5" fill="#0a0f1e"/>
<rect x="395.67" y="335.5" width="9.6" height="9.6" rx="1" fill="url(#grd)"/>
<circle cx="400.47" cy="340.3" r="2.8" fill="#e8c23a"/>
<circle cx="400.47" cy="340.3" r="1.7" fill="#0a1020"/>
</g>
</svg>
</div>
<div class="abs" style="left:0;top:83px;width:540.5px;height:1px;background:#000814"></div>
<div class="abs" style="left:540.5px;top:83px;width:1px;height:475px;background:#fafafa"></div>
<svg class="abs" style="left:0;top:0" width="600" height="600" viewBox="0 0 600 600">

<rect x="542.7" y="87.2" width="21.8" height="21.3" rx="1.2" fill="#bcdcf6" stroke="#4c9ae2" stroke-width="1"/>
<path d="M550.3 92.5 V102.5 L552.8 100.3 L554.8 104 L556.3 103.2 L554.5 99.6 L557.5 99.2 Z" fill="#404040"/>
<path d="M546.5 113.5 L562 129.5 M562 113.5 L546.5 129.5" stroke="#505050" stroke-width="1"/><rect x="552.5" y="120" width="3.2" height="3.2" fill="#f0f0f0" stroke="#505050" stroke-width="0.8"/>
<rect x="544" y="136" width="20" height="1" fill="#a8a8a8"/>
<rect x="547.5" y="142.5" width="4" height="4.5" fill="#1f7ad0"/><rect x="547.5" y="155.5" width="4" height="4.5" fill="#1f7ad0"/>
<rect x="552.5" y="142.5" width="4" height="4.5" fill="#1f7ad0"/><rect x="552.5" y="155.5" width="4" height="4.5" fill="#1f7ad0"/>
<rect x="557.5" y="142.5" width="4" height="4.5" fill="#1f7ad0"/><rect x="557.5" y="155.5" width="4" height="4.5" fill="#1f7ad0"/>
<path d="M547 145 Q545 145 545 148.5 Q545 151 544 151 Q545 151 545 153.5 Q545 157.5 547 157.5" fill="none" stroke="#505050" stroke-width="0.9"/><path d="M561.5 145 V157.5" stroke="#a0a0a0" stroke-width="0.6"/>
<path d="M546 183.5 L550 175 H557 L562 167.5" fill="none" stroke="#1f7ad0" stroke-width="1.6" stroke-linecap="round"/>
<path d="M565 181 V186.5 H559.5 Z" fill="#000"/>
<path d="M546 200 Q546.5 204 548.5 204 Q550.5 204 550.5 199.5 Q550.5 195.5 552 195.5 Q553.5 195.5 553.5 199.5 Q553.5 203.5 555 203.5 Q556.5 203.5 556.5 199.5 Q556.5 195.5 558 195.5 Q559.5 195.5 559.5 199 Q559.5 202 562 200" fill="none" stroke="#1f7ad0" stroke-width="1.6"/>
<path d="M565 205 V210.5 H559.5 Z" fill="#000"/>
<circle cx="553.8" cy="223.5" r="4.1" fill="none" stroke="#f0900a" stroke-width="2.6"/>
<path d="M551.5 240 H561.5 V255 H546 V248 H551.5 Z" fill="#1f7ad0"/><circle cx="557.5" cy="247" r="1.6" fill="#f0f0f0"/><path d="M557.5 247 H561" stroke="#222" stroke-width="0.9"/>
<defs><pattern id="kh" width="3.2" height="3.2" patternUnits="userSpaceOnUse" patternTransform="rotate(45)"><rect width="3.2" height="3.2" fill="#f8f8f8"/><rect width="1.6" height="3.2" fill="#222"/></pattern></defs>
<path d="M551.5 264 H561.5 V279 H546 V271.5 H551.5 Z" fill="url(#kh)" stroke="#555" stroke-width="0.6"/>
<rect x="544" y="286" width="20" height="1" fill="#a8a8a8"/>
<path d="M547 308 L561 294.5" stroke="#404040" stroke-width="1.4" stroke-linecap="round"/>
<path d="M547 332 A14 14 0 0 1 561 318" fill="none" stroke="#404040" stroke-width="1.4" stroke-linecap="round"/>
<rect x="547" y="343.3" width="13.6" height="12" fill="#c4c4c4" stroke="#404040" stroke-width="1.2"/>
<circle cx="553.8" cy="373" r="6.8" fill="#c4c4c4" stroke="#404040" stroke-width="1.2"/>
<path d="M547 391 L561 393.5 L559.8 402.5 L548.5 404.5 L553.5 397.5 Z" fill="#c4c4c4" stroke="#404040" stroke-width="1.2" stroke-linejoin="round"/>
<path d="M546 420.8 H562" stroke="#1f7ad0" stroke-width="1.2" stroke-dasharray="2.5 1.2"/><circle cx="550" cy="420.8" r="1" fill="#1f7ad0"/><circle cx="561" cy="420.8" r="1" fill="#1f7ad0"/>
<path d="M558.5 414 Q559 420 554 421 Q549 423 549.5 429" fill="none" stroke="#404040" stroke-width="1.4"/>
<rect x="546" y="437" width="16.3" height="16.4" rx="2.2" fill="#4a4a4a"/><path d="M547.8 451.5 L552.3 444.8 L555.3 448.5 L557 446.5 L560.5 451.5 Z" fill="#fff"/><circle cx="556.5" cy="441.8" r="2" fill="#fff"/>
<path d="M548 463.5 H560 M554.2 463.5 V477" stroke="#404040" stroke-width="2.8"/>
<rect x="546.8" y="487.5" width="14" height="12.3" fill="#f8f8f8" stroke="#505050" stroke-width="1.3"/><rect x="548.3" y="489" width="11" height="9.3" fill="#c8c8c8"/><path d="M549.5 491.5 H558 M549.5 494 H558 M549.5 496.5 H555" stroke="#505050" stroke-width="0.9"/>
<rect x="546.5" y="508.5" width="15.5" height="17" fill="#fff" stroke="#606060" stroke-width="1"/><rect x="546.5" y="508.5" width="15.5" height="3" fill="#c0c0c0"/><path d="M546.5 512 H562 M546.5 516.5 H562 M546.5 521 H562 M551.5 508.5 V525.5 M557 508.5 V525.5" stroke="#606060" stroke-width="0.9"/>
<path d="M547.5 535.3 H561.5 M560.3 537 V547" stroke="#404040" stroke-width="0.9"/><path d="M558.8 538.5 L560.3 536.5 L561.8 538.5 M558.8 545.5 L560.3 547.5 L561.8 545.5" fill="none" stroke="#404040" stroke-width="0.8"/>
<path d="M554 548 H560" stroke="#888" stroke-width="1.2"/><circle cx="547.5" cy="535.3" r="2" fill="#1f7ad0"/><circle cx="554" cy="548" r="2" fill="#1f7ad0"/>
<path d="M566 546.5 V553 H559.5 Z" fill="#000"/>
</svg>
<!-- appearance panel -->
<div class="abs" style="left:567.4px;top:83px;width:2.3px;height:475px;background:#e0e0e0"></div>
<div class="abs" style="left:569.7px;top:83.7px;width:31px;height:14.3px;background:#c8c8c8"></div>
<div class="abs" style="left:570.4px;top:100px;width:30px;height:294px;background:#fafafa"></div>
<div class="abs" style="left:572px;top:118.7px;width:28px;height:10.5px;background:#e2e2e2"></div>
<svg class="abs" style="left:575.5px;top:120px" width="5" height="7.5" viewBox="0 0 5 7.5"><path d="M0.3 0 L4.3 3.75 L0.3 7.5 Z" fill="#2020ff"/></svg>

<div class="abs" style="left:582.7px;top:120.4px;width:9.7px;height:8.4px;background:#c83434"></div>
<svg class="abs" style="left:594px;top:119.1px" width="6" height="11" viewBox="0 0 6 11"><circle cx="7" cy="5.5" r="5.2" fill="#3c3c3c"/><path d="M3.3 5.5 Q6.5 2.4 9.5 5.5 Q6.5 8.6 3.3 5.5 Z" fill="#fff"/><circle cx="7" cy="5.5" r="1.5" fill="#3c3c3c"/></svg>
<div class="abs" style="left:582.7px;top:132.1px;width:9.7px;height:8.4px;background:#4d7fc4"></div>
<svg class="abs" style="left:594px;top:130.8px" width="6" height="11" viewBox="0 0 6 11"><circle cx="7" cy="5.5" r="5.2" fill="#3c3c3c"/><path d="M3.3 5.5 Q6.5 2.4 9.5 5.5 Q6.5 8.6 3.3 5.5 Z" fill="#fff"/><circle cx="7" cy="5.5" r="1.5" fill="#3c3c3c"/></svg>
<div class="abs" style="left:582.7px;top:143.8px;width:9.7px;height:8.4px;background:#860a86"></div>
<svg class="abs" style="left:594px;top:142.5px" width="6" height="11" viewBox="0 0 6 11"><circle cx="7" cy="5.5" r="5.2" fill="#3c3c3c"/><path d="M3.3 5.5 Q6.5 2.4 9.5 5.5 Q6.5 8.6 3.3 5.5 Z" fill="#fff"/><circle cx="7" cy="5.5" r="1.5" fill="#3c3c3c"/></svg>
<div class="abs" style="left:582.7px;top:155.6px;width:9.7px;height:8.4px;background:#00008a"></div>
<svg class="abs" style="left:594px;top:154.3px" width="6" height="11" viewBox="0 0 6 11"><circle cx="7" cy="5.5" r="5.2" fill="#a0a0a0"/><path d="M3.3 5.5 Q6.5 2.4 9.5 5.5 Q6.5 8.6 3.3 5.5 Z" fill="#fff"/><circle cx="7" cy="5.5" r="1.5" fill="#a0a0a0"/></svg>
<div class="abs" style="left:582.7px;top:167.3px;width:9.7px;height:8.4px;background:#a08a82"></div>
<svg class="abs" style="left:594px;top:166.0px" width="6" height="11" viewBox="0 0 6 11"><circle cx="7" cy="5.5" r="5.2" fill="#3c3c3c"/><path d="M3.3 5.5 Q6.5 2.4 9.5 5.5 Q6.5 8.6 3.3 5.5 Z" fill="#fff"/><circle cx="7" cy="5.5" r="1.5" fill="#3c3c3c"/></svg>
<div class="abs" style="left:582.7px;top:179.0px;width:9.7px;height:8.4px;background:#14aaa6"></div>
<svg class="abs" style="left:594px;top:177.7px" width="6" height="11" viewBox="0 0 6 11"><circle cx="7" cy="5.5" r="5.2" fill="#a0a0a0"/><path d="M3.3 5.5 Q6.5 2.4 9.5 5.5 Q6.5 8.6 3.3 5.5 Z" fill="#fff"/><circle cx="7" cy="5.5" r="1.5" fill="#a0a0a0"/></svg>
<div class="abs" style="left:582.7px;top:190.7px;width:9.7px;height:8.4px;background:#f2eaa2"></div>
<svg class="abs" style="left:594px;top:189.4px" width="6" height="11" viewBox="0 0 6 11"><circle cx="7" cy="5.5" r="5.2" fill="#3c3c3c"/><path d="M3.3 5.5 Q6.5 2.4 9.5 5.5 Q6.5 8.6 3.3 5.5 Z" fill="#fff"/><circle cx="7" cy="5.5" r="1.5" fill="#3c3c3c"/></svg>
<div class="abs" style="left:582.7px;top:202.4px;width:9.7px;height:8.4px;background:#e8b0a0"></div>
<svg class="abs" style="left:594px;top:201.1px" width="6" height="11" viewBox="0 0 6 11"><circle cx="7" cy="5.5" r="5.2" fill="#a0a0a0"/><path d="M3.3 5.5 Q6.5 2.4 9.5 5.5 Q6.5 8.6 3.3 5.5 Z" fill="#fff"/><circle cx="7" cy="5.5" r="1.5" fill="#a0a0a0"/></svg>
<div class="abs" style="left:582.7px;top:214.2px;width:9.7px;height:8.4px;background:#5a2a82"></div>
<svg class="abs" style="left:594px;top:212.9px" width="6" height="11" viewBox="0 0 6 11"><circle cx="7" cy="5.5" r="5.2" fill="#3c3c3c"/><path d="M3.3 5.5 Q6.5 2.4 9.5 5.5 Q6.5 8.6 3.3 5.5 Z" fill="#fff"/><circle cx="7" cy="5.5" r="1.5" fill="#3c3c3c"/></svg>
<div class="abs" style="left:582.7px;top:225.9px;width:9.7px;height:8.4px;background:#0e6a5e"></div>
<svg class="abs" style="left:594px;top:224.6px" width="6" height="11" viewBox="0 0 6 11"><circle cx="7" cy="5.5" r="5.2" fill="#a0a0a0"/><path d="M3.3 5.5 Q6.5 2.4 9.5 5.5 Q6.5 8.6 3.3 5.5 Z" fill="#fff"/><circle cx="7" cy="5.5" r="1.5" fill="#a0a0a0"/></svg>
<div class="abs" style="left:582.7px;top:237.6px;width:9.7px;height:8.4px;background:#c0c0c0"></div>
<svg class="abs" style="left:594px;top:236.3px" width="6" height="11" viewBox="0 0 6 11"><circle cx="7" cy="5.5" r="5.2" fill="#a0a0a0"/><path d="M3.3 5.5 Q6.5 2.4 9.5 5.5 Q6.5 8.6 3.3 5.5 Z" fill="#fff"/><circle cx="7" cy="5.5" r="1.5" fill="#a0a0a0"/></svg>
<div class="abs" style="left:582.7px;top:249.3px;width:9.7px;height:8.4px;background:#5a8ee0"></div>
<svg class="abs" style="left:594px;top:248.0px" width="6" height="11" viewBox="0 0 6 11"><circle cx="7" cy="5.5" r="5.2" fill="#a0a0a0"/><path d="M3.3 5.5 Q6.5 2.4 9.5 5.5 Q6.5 8.6 3.3 5.5 Z" fill="#fff"/><circle cx="7" cy="5.5" r="1.5" fill="#a0a0a0"/></svg>
<div class="abs" style="left:582.7px;top:261.0px;width:9.7px;height:8.4px;background:#a8d8cc"></div>
<svg class="abs" style="left:594px;top:259.7px" width="6" height="11" viewBox="0 0 6 11"><circle cx="7" cy="5.5" r="5.2" fill="#a0a0a0"/><path d="M3.3 5.5 Q6.5 2.4 9.5 5.5 Q6.5 8.6 3.3 5.5 Z" fill="#fff"/><circle cx="7" cy="5.5" r="1.5" fill="#a0a0a0"/></svg>
<div class="abs" style="left:582.7px;top:272.8px;width:9.7px;height:8.4px;background:#d8c850"></div>
<svg class="abs" style="left:594px;top:271.5px" width="6" height="11" viewBox="0 0 6 11"><circle cx="7" cy="5.5" r="5.2" fill="#a0a0a0"/><path d="M3.3 5.5 Q6.5 2.4 9.5 5.5 Q6.5 8.6 3.3 5.5 Z" fill="#fff"/><circle cx="7" cy="5.5" r="1.5" fill="#a0a0a0"/></svg>
<div class="abs" style="left:582.7px;top:284.5px;width:9.7px;height:8.4px;background:#c8ccc8"></div>
<svg class="abs" style="left:594px;top:283.2px" width="6" height="11" viewBox="0 0 6 11"><circle cx="7" cy="5.5" r="5.2" fill="#3c3c3c"/><path d="M3.3 5.5 Q6.5 2.4 9.5 5.5 Q6.5 8.6 3.3 5.5 Z" fill="#fff"/><circle cx="7" cy="5.5" r="1.5" fill="#3c3c3c"/></svg>
<div class="abs" style="left:582.7px;top:296.2px;width:9.7px;height:8.4px;background:#ff20e0"></div>
<svg class="abs" style="left:594px;top:294.9px" width="6" height="11" viewBox="0 0 6 11"><circle cx="7" cy="5.5" r="5.2" fill="#a0a0a0"/><path d="M3.3 5.5 Q6.5 2.4 9.5 5.5 Q6.5 8.6 3.3 5.5 Z" fill="#fff"/><circle cx="7" cy="5.5" r="1.5" fill="#a0a0a0"/></svg>
<div class="abs" style="left:582.7px;top:307.9px;width:9.7px;height:8.4px;background:#ff20e0"></div>
<svg class="abs" style="left:594px;top:306.6px" width="6" height="11" viewBox="0 0 6 11"><circle cx="7" cy="5.5" r="5.2" fill="#3c3c3c"/><path d="M3.3 5.5 Q6.5 2.4 9.5 5.5 Q6.5 8.6 3.3 5.5 Z" fill="#fff"/><circle cx="7" cy="5.5" r="1.5" fill="#3c3c3c"/></svg>
<div class="abs" style="left:582.7px;top:319.6px;width:9.7px;height:8.4px;background:#20e0ff"></div>
<svg class="abs" style="left:594px;top:318.3px" width="6" height="11" viewBox="0 0 6 11"><circle cx="7" cy="5.5" r="5.2" fill="#a0a0a0"/><path d="M3.3 5.5 Q6.5 2.4 9.5 5.5 Q6.5 8.6 3.3 5.5 Z" fill="#fff"/><circle cx="7" cy="5.5" r="1.5" fill="#a0a0a0"/></svg>
<div class="abs" style="left:582.7px;top:331.4px;width:9.7px;height:8.4px;background:#a4a4a4"></div>
<svg class="abs" style="left:594px;top:330.1px" width="6" height="11" viewBox="0 0 6 11"><circle cx="7" cy="5.5" r="5.2" fill="#3c3c3c"/><path d="M3.3 5.5 Q6.5 2.4 9.5 5.5 Q6.5 8.6 3.3 5.5 Z" fill="#fff"/><circle cx="7" cy="5.5" r="1.5" fill="#3c3c3c"/></svg>
<div class="abs" style="left:582.7px;top:343.1px;width:9.7px;height:8.4px;background:#50588a"></div>
<svg class="abs" style="left:594px;top:341.8px" width="6" height="11" viewBox="0 0 6 11"><circle cx="7" cy="5.5" r="5.2" fill="#a0a0a0"/><path d="M3.3 5.5 Q6.5 2.4 9.5 5.5 Q6.5 8.6 3.3 5.5 Z" fill="#fff"/><circle cx="7" cy="5.5" r="1.5" fill="#a0a0a0"/></svg>
<div class="abs" style="left:582.7px;top:354.8px;width:9.7px;height:8.4px;background:#c0c0c0"></div>
<svg class="abs" style="left:594px;top:353.5px" width="6" height="11" viewBox="0 0 6 11"><circle cx="7" cy="5.5" r="5.2" fill="#a0a0a0"/><path d="M3.3 5.5 Q6.5 2.4 9.5 5.5 Q6.5 8.6 3.3 5.5 Z" fill="#fff"/><circle cx="7" cy="5.5" r="1.5" fill="#a0a0a0"/></svg>
<div class="abs" style="left:582.7px;top:366.5px;width:9.7px;height:8.4px;background:#5090e0"></div>
<svg class="abs" style="left:594px;top:365.2px" width="6" height="11" viewBox="0 0 6 11"><circle cx="7" cy="5.5" r="5.2" fill="#a0a0a0"/><path d="M3.3 5.5 Q6.5 2.4 9.5 5.5 Q6.5 8.6 3.3 5.5 Z" fill="#fff"/><circle cx="7" cy="5.5" r="1.5" fill="#a0a0a0"/></svg>

<svg class="abs" style="left:579px;top:382.6px" width="4" height="5.5" viewBox="0 0 4 5.5"><path d="M0 0 L3.5 2.75 L0 5.5 Z" fill="#000"/></svg>
<div class="dd" style="left:573.7px;top:413.7px;width:40px;height:15.5px"></div>
<div class="dd" style="left:573.7px;top:444.7px;width:40px;height:15.5px"></div>
<div class="abs" style="left:569.7px;top:467.5px;width:31px;height:14.2px;background:#c8c8c8"></div>

<div class="cb" style="top:486.3px"></div>
<div class="cb" style="top:498.1px"></div>
<div class="cb" style="top:509.8px"></div>
<div class="cb" style="top:521.5px"></div>
<div class="cb" style="top:533.3px"></div>
<div class="cb" style="top:545.0px"></div>

<!-- status bar -->
<div class="abs" style="left:0;top:581px;width:600px;height:1px;background:#d8d8d8"></div>
<div class="abs" style="left:0;top:582px;width:600px;height:16px;background:#f0f0f0"></div>
<div class="sep" style="left:79px;top:583px;height:14px;background:#d8d8d8"></div>
<div class="sep" style="left:136px;top:583px;height:14px;background:#d8d8d8"></div>
<div class="sep" style="left:252.5px;top:583px;height:14px;background:#d8d8d8"></div>
<div class="sep" style="left:441.5px;top:583px;height:14px;background:#d8d8d8"></div>
<div class="sep" style="left:580.5px;top:583px;height:14px;background:#d8d8d8"></div>
<div class="abs" style="left:0;top:598px;width:600px;height:2px;background:#141414"></div>
<svg class="abs" style="left:0;top:0" width="600" height="600" viewBox="0 0 600 600" font-family="Liberation Sans" stroke-width="0.22">
<text x="10" y="27.75" font-size="10.2" fill="#1e1e1e" stroke="#1e1e1e" textLength="19.5" lengthAdjust="spacingAndGlyphs" xml:space="preserve">Help</text>
<text x="32.5" y="73.5" font-size="9.45" fill="#1e1e1e" stroke="#1e1e1e" textLength="44.8" lengthAdjust="spacingAndGlyphs" xml:space="preserve">F.Cu (PgUp)</text>
<text x="142.5" y="73.5" font-size="9.45" fill="#1e1e1e" stroke="#1e1e1e" textLength="84.8" lengthAdjust="spacingAndGlyphs" xml:space="preserve">0.0100 mm (0.39 mils)</text>
<text x="272.5" y="73.5" font-size="9.45" fill="#1e1e1e" stroke="#1e1e1e" textLength="41.5" lengthAdjust="spacingAndGlyphs" xml:space="preserve">Zoom 2.20</text>
<text transform="translate(572 93.75) scale(0.9 1)" font-size="9.8" fill="#1e1e1e" stroke="#1e1e1e" xml:space="preserve">Appearance</text>
<text x="574.75" y="112.75" font-size="9.8" fill="#1e1e1e" stroke="#1e1e1e" textLength="23.5" lengthAdjust="spacingAndGlyphs" xml:space="preserve">Layers</text>
<text transform="translate(584.5 388.3) scale(0.9 1)" font-size="7.9" fill="#1e1e1e" stroke="#1e1e1e" xml:space="preserve">Layer Display Options</text>
<text transform="translate(573.7 409.9) scale(0.9 1)" font-size="7.9" fill="#1e1e1e" stroke="#1e1e1e" xml:space="preserve">Presets</text>
<text transform="translate(577.5 424.5) scale(0.9 1)" font-size="8.5" fill="#555" stroke="#555" xml:space="preserve">---</text>
<text transform="translate(573.7 440.9) scale(0.9 1)" font-size="7.9" fill="#1e1e1e" stroke="#1e1e1e" xml:space="preserve">Viewports</text>
<text transform="translate(577.5 455.5) scale(0.9 1)" font-size="8.5" fill="#555" stroke="#555" xml:space="preserve">---</text>
<text transform="translate(572 477.6) scale(0.9 1)" font-size="9.45" fill="#1e1e1e" stroke="#1e1e1e" xml:space="preserve">Selection Filter</text>
<text x="0" y="594" font-size="10.2" fill="#1e1e1e" stroke="#1e1e1e" textLength="75.8" lengthAdjust="spacingAndGlyphs" xml:space="preserve">ehzchalenge.kicad...</text>
<text x="81" y="594" font-size="10.2" fill="#1e1e1e" stroke="#1e1e1e" textLength="25.2" lengthAdjust="spacingAndGlyphs" xml:space="preserve">Z 2.27</text>
<text x="139" y="594" font-size="10.2" fill="#1e1e1e" stroke="#1e1e1e" textLength="79.8" lengthAdjust="spacingAndGlyphs" xml:space="preserve">X 90.5800  Y 97.2600</text>
<text x="257.5" y="594" font-size="10.2" fill="#1e1e1e" stroke="#1e1e1e" textLength="96.3" lengthAdjust="spacingAndGlyphs" xml:space="preserve">r 132.9069  theta -47.037</text>
<text x="446.4" y="594" font-size="10.2" fill="#1e1e1e" stroke="#1e1e1e" textLength="43.3" lengthAdjust="spacingAndGlyphs" xml:space="preserve">grid 0.0100</text>
<text transform="translate(583.8 594) scale(0.9 1)" font-size="10.2" fill="#1e1e1e" stroke="#1e1e1e" xml:space="preserve">mm</text>
<text transform="translate(583.75 493.6) scale(0.9 1)" font-size="8.1" fill="#1e1e1e" stroke="#1e1e1e" xml:space="preserve">All items</text>
<text transform="translate(583.75 505.35) scale(0.9 1)" font-size="8.1" fill="#1e1e1e" stroke="#1e1e1e" xml:space="preserve">Footprints</text>
<text transform="translate(583.75 517.1) scale(0.9 1)" font-size="8.1" fill="#1e1e1e" stroke="#1e1e1e" xml:space="preserve">Tracks</text>
<text transform="translate(583.75 528.8499999999999) scale(0.9 1)" font-size="8.1" fill="#1e1e1e" stroke="#1e1e1e" xml:space="preserve">Pads</text>
<text transform="translate(583.75 540.5999999999999) scale(0.9 1)" font-size="8.1" fill="#1e1e1e" stroke="#1e1e1e" xml:space="preserve">Zones</text>
<text transform="translate(583.75 552.3499999999999) scale(0.9 1)" font-size="8.1" fill="#1e1e1e" stroke="#1e1e1e" xml:space="preserve">Dimensions</text>
</svg>
</body></html>
